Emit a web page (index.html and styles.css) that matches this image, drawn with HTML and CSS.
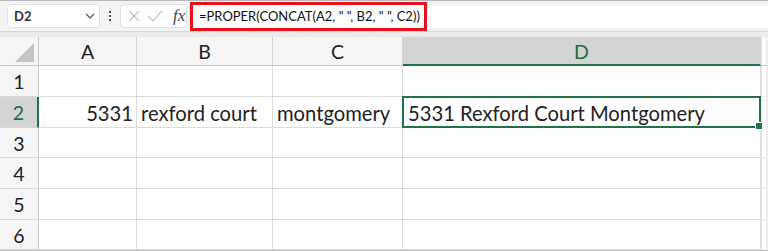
FILE: index.html
```html
<!DOCTYPE html>
<html lang="en">
<head>
  <meta charset="UTF-8" />
  <title>Excel - PROPER CONCAT</title>
  <link rel="stylesheet" href="styles.css">
</head>
<body>
  <div class="toolbar">
    <div class="namebox">
      <span class="ref">D2</span>
      <svg class="chevron" width="10" height="6" viewBox="0 0 10 6"><path d="M1 1 L5 5 L9 1" fill="none" stroke="#555" stroke-width="1.2"/></svg>
    </div>
    <div class="dots"><i></i><i></i><i></i></div>
    <div class="fxbox">
      <svg width="14" height="14" viewBox="0 0 14 14"><path d="M2 2 L12 12 M12 2 L2 12" stroke="#c4c4c4" stroke-width="1.2"/></svg>
      <svg width="16" height="14" viewBox="0 0 16 14"><path d="M1 7 L6 12 L15 2" fill="none" stroke="#c4c4c4" stroke-width="1.2"/></svg>
      <span class="fx">fx</span>
    </div>
    <div class="formula">
      <span class="formula-text">=PROPER(CONCAT(A2, " ", B2, " ", C2))</span>
    </div>
  </div>
  <div class="strip"></div>

  <div class="sheet">
    <div class="corner"><span class="tri"></span></div>
    <div class="col-head">A</div>
    <div class="col-head">B</div>
    <div class="col-head">C</div>
    <div class="col-head active">D</div>
    <div class="edge head-edge"></div>

    <div class="row-head">1</div>
    <div class="cell"></div><div class="cell"></div><div class="cell"></div><div class="cell"></div><div class="edge"></div>

    <div class="row-head active">2</div>
    <div class="cell num">5331</div>
    <div class="cell">rexford court</div>
    <div class="cell">montgomery</div>
    <div class="cell selected">5331 Rexford Court Montgomery</div>
    <div class="edge"></div>

    <div class="row-head">3</div>
    <div class="cell"></div><div class="cell"></div><div class="cell"></div><div class="cell"></div><div class="edge"></div>
    <div class="row-head">4</div>
    <div class="cell"></div><div class="cell"></div><div class="cell"></div><div class="cell"></div><div class="edge"></div>
    <div class="row-head">5</div>
    <div class="cell"></div><div class="cell"></div><div class="cell"></div><div class="cell"></div><div class="edge"></div>
    <div class="row-head">6</div>
    <div class="cell"></div><div class="cell"></div><div class="cell"></div><div class="cell"></div><div class="edge"></div>
  </div>
</body>
</html>
```

FILE: styles.css
```css
* { box-sizing: border-box; }
body {
  margin: 0;
  width: 768px;
  height: 251px;
  overflow: hidden;
  background: #fff;
  font-family: Lato, "Open Sans", sans-serif;
  color: #222;
}
.toolbar {
  height: 31px;
  border-top: 1px solid #b8b8b8;
  background: #f3f3f3;
  display: flex;
  align-items: center;
  padding-left: 7px;
}
.namebox {
  width: 93px; height: 24px;
  background: #fff;
  border: 1px solid #e2e2e2;
  border-radius: 4px;
  display: flex; align-items: center; justify-content: space-between;
  padding: 0 4px 0 6px;
}
.ref { font-size: 13px; font-weight: bold; color: #333; }
.dots {
  width: 20px;
  display: flex; flex-direction: column; align-items: center; gap: 2px;
}
.dots i { width: 2px; height: 2px; background: #555; display: block; }
.fxbox {
  width: 67px; height: 24px;
  background: #fff;
  border: 1px solid #e2e2e2;
  border-radius: 4px;
  display: flex; align-items: center; gap: 6px;
  padding-left: 6px;
}
.fx { font-family: "Liberation Serif", serif; font-style: italic; font-size: 17px; color: #444; margin-left: 4px; }
.formula {
  flex: 1;
  height: 23px;
  margin-left: 3px;
  background: #fff;
  display: flex; align-items: center;
}
.formula-text {
  font-size: 13px;
  color: #111;
  border: 3px solid #e8101a;
  height: 29px;
  padding: 0 4px 0 6px;
  display: flex; align-items: center;
  white-space: pre;
}
.strip {
  height: 6px;
  background: #ebebeb;
  border-top: 1px solid #d8d8d8;
}
.sheet {
  display: grid;
  grid-template-columns: 39px 98px 136px 130px 358px 7px;
  grid-template-rows: 29px 31px 31px 30px 31px 31px 30px;
  border-bottom: 1px solid #bdbdbd;
}
.corner {
  background: #f5f5f5;
  border-right: 1px solid #c8c8c8;
  border-bottom: 1px solid #c8c8c8;
  position: relative;
}
.tri {
  position: absolute; right: 4px; bottom: 3px;
  width: 0; height: 0;
  border-left: 19px solid transparent;
  border-bottom: 19px solid #c4c4c4;
}
.col-head {
  background: #f5f5f5;
  border-right: 1px solid #d4d4d4;
  border-bottom: 1px solid #c8c8c8;
  display: flex; align-items: center; justify-content: center;
  font-size: 19.5px; color: #222;
  padding-top: 1px;
}
.col-head.active {
  background: #d3d3d3;
  color: #1e6b41;
  border-bottom: 2px solid #217346;
}
.row-head {
  background: #f5f5f5;
  border-right: 1px solid #c8c8c8;
  border-bottom: 1px solid #d8d8d8;
  display: flex; align-items: center; justify-content: center;
  font-size: 19.5px; color: #222;
  padding-top: 1px;
}
.row-head.active {
  background: #d3d3d3;
  color: #1e6b41;
  border-right: 2px solid #217346;
}
.cell {
  border-right: 1px solid #dcdcdc;
  border-bottom: 1px solid #dcdcdc;
  font-size: 20.2px;
  display: flex; align-items: center;
  padding: 2px 3px 0 4px;
  white-space: nowrap;
}
.cell.num { justify-content: flex-end; }
.cell.selected {
  border: 2px solid #217346;
  margin: -1px 0 0 -1px;
  padding-left: 4px;
  position: relative;
}
.cell.selected::after {
  content: "";
  position: absolute; right: -4px; bottom: -4px;
  width: 6px; height: 6px;
  background: #217346;
  border: 1px solid #fff;
}
.edge {
  border-left: 1px solid #e4e4e4;
  border-right: 2px solid #ededed;
  border-bottom: 1px solid #ececec;
}
.head-edge { background: #fff; border-bottom: 1px solid #c8c8c8; }
```
